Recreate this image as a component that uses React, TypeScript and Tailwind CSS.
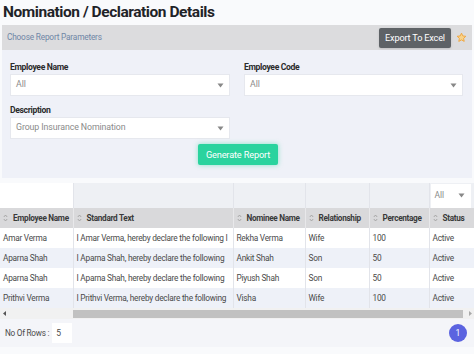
import React from "react";

const rows = [
  { name: "Amar Verma", text: "I Amar Verma, hereby declare the following I", nominee: "Rekha Verma", rel: "Wife", pct: "100", status: "Active" },
  { name: "Aparna Shah", text: "I Aparna Shah, hereby declare the following", nominee: "Ankit Shah", rel: "Son", pct: "50", status: "Active" },
  { name: "Aparna Shah", text: "I Aparna Shah, hereby declare the following", nominee: "Piyush Shah", rel: "Son", pct: "50", status: "Active" },
  { name: "Prithvi Verma", text: "I Prithvi Verma, hereby declare the following", nominee: "Visha", rel: "Wife", pct: "100", status: "Active" },
];

const cols = [
  { label: "Employee Name", w: "w-[73px]" },
  { label: "Standard Text", w: "w-[160px]" },
  { label: "Nominee Name", w: "w-[72px]" },
  { label: "Relationship", w: "w-[64px]" },
  { label: "Percentage", w: "w-[60px]" },
  { label: "Status", w: "w-[60px]" },
];

function Caret() {
  return (
    <svg width="7" height="5" viewBox="0 0 7 5" className="shrink-0">
      <path d="M0.5 0.5 L6.5 0.5 L3.5 4.5 Z" fill="#888" />
    </svg>
  );
}

function SortIcon() {
  return (
    <svg width="5" height="8" viewBox="0 0 5 8" className="shrink-0">
      <path d="M0.8 3 L2.5 1 L4.2 3" fill="none" stroke="#9a9a9a" strokeWidth="0.8" />
      <path d="M0.8 5 L2.5 7 L4.2 5" fill="none" stroke="#9a9a9a" strokeWidth="0.8" />
    </svg>
  );
}

function Star() {
  return (
    <svg width="11" height="11" viewBox="0 0 24 24">
      <path
        d="M12 2.5 L14.9 8.6 L21.5 9.4 L16.6 13.9 L17.9 20.5 L12 17.2 L6.1 20.5 L7.4 13.9 L2.5 9.4 L9.1 8.6 Z"
        fill="#f9d38a"
        stroke="#f0a43a"
        strokeWidth="2"
        strokeLinejoin="round"
      />
    </svg>
  );
}

function Select({ value, className }: { value: string; className?: string }) {
  return (
    <div className={`flex items-center justify-between bg-white border border-[#e6e8ee] h-[22px] px-[5px] ${className ?? ""}`}>
      <span className="text-[8.8px] tracking-[-0.1px] text-[#8a8a8a]">{value}</span>
      <Caret />
    </div>
  );
}

export default function App() {
  return (
    <div className="w-[474px] h-[354px] overflow-hidden bg-[#f9fafc] font-['Roboto',sans-serif] flex flex-col">
      <h1 className="text-[15.5px] font-bold text-[#1f2328] leading-[24px] pl-[3px] tracking-[-0.45px]">
        Nomination / Declaration Details
      </h1>

      <div className="mt-[1px] mx-[2px] flex flex-col">
        <div className="h-[25px] bg-[#dcdcde] flex items-center justify-between pl-[5px] pr-[5px]">
          <span className="text-[8.3px] tracking-[-0.2px] text-[#6f86a6]">Choose Report Parameters</span>
          <div className="flex items-center gap-[5px]">
            <button className="h-[20px] w-[72px] bg-[#5e6266] text-white text-[9.2px] tracking-[-0.2px] rounded-[2px] shadow-sm">
              Export To Excel
            </button>
            <Star />
          </div>
        </div>

        <div className="bg-[#eff1f8] h-[128px] px-[8px] pt-[11px]">
          <div className="grid grid-cols-2 gap-x-[14px]">
            <div>
              <div className="text-[8.6px] font-bold tracking-[-0.35px] text-[#2b2b2b] h-[13px]">Employee Name</div>
              <Select value="All" />
            </div>
            <div>
              <div className="text-[8.6px] font-bold tracking-[-0.35px] text-[#2b2b2b] h-[13px]">Employee Code</div>
              <Select value="All" className="mr-[1px]" />
            </div>
            <div className="mt-[8px]">
              <div className="text-[8.6px] font-bold tracking-[-0.35px] text-[#2b2b2b] h-[13px]">Description</div>
              <Select value="Group Insurance Nomination" />
            </div>
          </div>
          <div className="flex justify-center mt-[5px] pl-[2px]">
            <button className="h-[21px] w-[80px] bg-[#2ad39e] text-white text-[9.2px] tracking-[-0.15px] rounded-[2px] shadow-[0_0_5px_rgba(42,211,158,0.5)]">
              Generate Report
            </button>
          </div>
        </div>
      </div>

      <div className="mt-[5px] bg-[#f4f5f9] flex flex-col">
        <div className="overflow-hidden w-[474px]">
          <table className="border-collapse table-fixed w-[489px]">
            <thead>
              <tr className="h-[25px]">
                {cols.map((c, i) => (
                  <td
                    key={c.label}
                    className={`${c.w} p-0 border-r border-[#e2e4ea] ${i === 0 ? "bg-white" : "bg-[#eef0f4]"}`}
                  >
                    {i === 5 && (
                      <div className="mx-[1px] bg-white h-[24px] flex items-center justify-between pl-[4px] pr-[6px] w-[40px]">
                        <span className="text-[8.5px] text-[#8a8a8a]">All</span>
                        <Caret />
                      </div>
                    )}
                  </td>
                ))}
              </tr>
              <tr className="h-[20px] bg-[#d9d9db]">
                {cols.map((c) => (
                  <th key={c.label} className="p-0 text-left border-r border-[#e8e8ea]">
                    <div className="flex items-center gap-[5px] pl-[3px]">
                      <SortIcon />
                      <span className="text-[8.2px] font-bold tracking-[-0.3px] text-[#3a3a3a] whitespace-nowrap">{c.label}</span>
                    </div>
                  </th>
                ))}
              </tr>
            </thead>
            <tbody>
              {rows.map((r, i) => (
                <tr key={i} className={`h-[20px] ${i % 2 === 0 ? "bg-white" : "bg-[#eef1f8]"}`}>
                  {[r.name, r.text, r.nominee, r.rel, r.pct, r.status].map((v, j) => (
                    <td
                      key={j}
                      className="p-0 pl-[3px] border-r border-[#e2e4ea] text-[8.3px] tracking-[-0.25px] text-[#4a4a4a] whitespace-nowrap overflow-hidden"
                    >
                      {v}
                    </td>
                  ))}
                </tr>
              ))}
            </tbody>
          </table>
        </div>

        <div className="h-[11px] bg-[#f1f1f1] flex items-center">
          <span className="w-[8px] flex justify-center">
            <svg width="3" height="5" viewBox="0 0 3 5"><path d="M3 0 L0 2.5 L3 5 Z" fill="#555" /></svg>
          </span>
          <div className="ml-[65px] h-[8px] w-[390px] bg-[#c1c1c1]" />
          <span className="ml-auto w-[8px] flex justify-center">
            <svg width="3" height="5" viewBox="0 0 3 5"><path d="M0 0 L3 2.5 L0 5 Z" fill="#aaa" /></svg>
          </span>
        </div>

        <div className="h-[28px] flex items-center justify-between pl-[5px] pr-[7px]">
          <div className="flex items-center gap-[3px]">
            <span className="text-[8.2px] tracking-[-0.25px] text-[#4a4a4a]">No Of Rows :</span>
            <div className="w-[20px] h-[20px] bg-white flex items-center pl-[4px] text-[8.5px] text-[#4a4a4a]">5</div>
          </div>
          <div className="w-[18px] h-[18px] rounded-full bg-[#5b63e0] text-white text-[8.5px] flex items-center justify-center">
            1
          </div>
        </div>
      </div>
    </div>
  );
}
